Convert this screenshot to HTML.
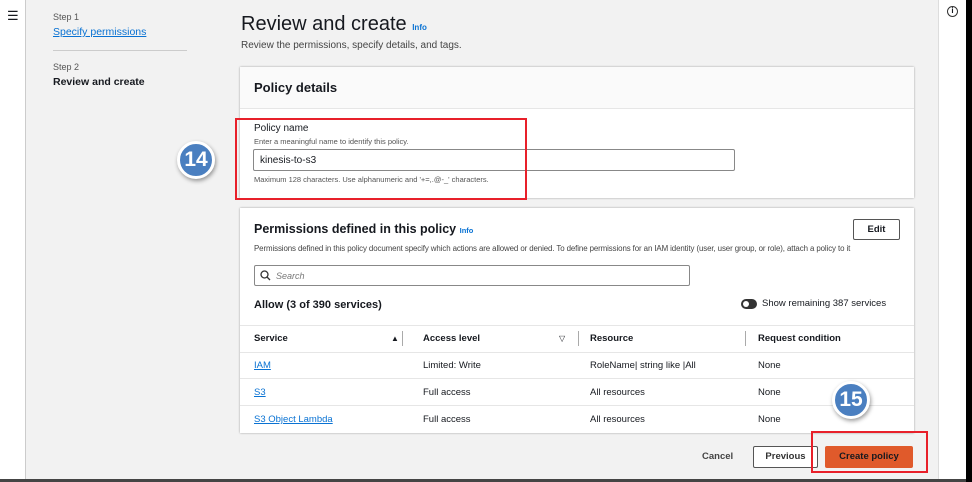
<!DOCTYPE html>
<html><head><style>
*{margin:0;padding:0;box-sizing:border-box}
body{width:972px;height:482px;overflow:hidden;background:#f2f2f2;font-family:"Liberation Sans",sans-serif;color:#16191f;position:relative}
.a{position:absolute;white-space:nowrap}
.lnk{color:#0972d3;text-decoration:underline}
.card{position:absolute;background:#fff;box-shadow:0 0 2px rgba(0,0,0,.35)}
.circ{position:absolute;border-radius:50%;background:#4a7fc0;border:3px solid #fff;box-shadow:1px 2px 4px rgba(0,0,0,.4);color:#fff;font-weight:bold;font-size:21px;display:flex;align-items:center;justify-content:center}
.hl{position:absolute;border-top:1px solid #e6e6e6}
</style></head><body>
<div class="a" style="left:0;top:0;width:26px;height:482px;background:#fff;border-right:1px solid #ccc"></div>
<div class="a" style="left:7px;top:8px;font-size:13px">☰</div>
<div class="a" style="left:938px;top:0;width:28px;height:482px;background:#fff;border-left:1px solid #ddd"></div>
<div class="a" style="left:966px;top:0;width:6px;height:482px;background:#000"></div>
<div class="a" style="left:947px;top:6px;width:11px;height:11px;border:1.3px solid #333;border-radius:50%;font-size:8px;line-height:8px;text-align:center;font-weight:bold">i</div>
<div class="a" style="left:0;top:479px;width:966px;height:3px;background:#444"></div>

<div class="a" style="left:53px;top:12px;font-size:9px;color:#555">Step 1</div>
<div class="a lnk" style="left:53px;top:26px;font-size:10.5px">Specify permissions</div>
<div class="hl" style="left:53px;top:50px;width:134px;border-color:#ccc"></div>
<div class="a" style="left:53px;top:62px;font-size:9px;color:#555">Step 2</div>
<div class="a" style="left:53px;top:76px;font-size:10.5px;font-weight:bold">Review and create</div>

<div class="a" style="left:241px;top:13px;font-size:20px">Review and create <span style="font-size:8px;color:#0972d3;font-weight:bold">Info</span></div>
<div class="a" style="left:241px;top:40px;font-size:10px;color:#444">Review the permissions, specify details, and tags.</div>

<div class="card" style="left:240px;top:67px;width:674px;height:131px">
  <div style="height:42px;background:#fafafa;border-bottom:1px solid #e6e6e6"></div>
  <div class="a" style="left:14px;top:13px;font-size:13px;font-weight:bold">Policy details</div>
  <div class="a" style="left:14px;top:56px;font-size:10px">Policy name</div>
  <div class="a" style="left:14px;top:70px;font-size:7.5px;color:#555">Enter a meaningful name to identify this policy.</div>
  <div class="a" style="left:13px;top:82px;width:482px;height:22px;border:1px solid #888;border-radius:2px;font-size:10px;padding:5px 0 0 6px">kinesis-to-s3</div>
  <div class="a" style="left:14px;top:108px;font-size:7.5px;color:#555">Maximum 128 characters. Use alphanumeric and '+=,.@-_' characters.</div>
</div>
<div class="a" style="left:235px;top:118px;width:292px;height:82px;border:2px solid #e8202a"></div>
<div class="circ" style="left:177px;top:141px;width:38px;height:38px">14</div>

<div class="card" style="left:240px;top:208px;width:674px;height:225px">
  <div class="a" style="left:14px;top:14px;font-size:12.5px;font-weight:bold">Permissions defined in this policy <span style="font-size:7.5px;color:#0972d3">Info</span></div>
  <div class="a" style="left:613px;top:11px;width:47px;height:21px;border:1px solid #555;border-radius:2px;font-size:9.5px;font-weight:bold;text-align:center;line-height:19px">Edit</div>
  <div class="a" style="left:14px;top:36px;font-size:7.9px;letter-spacing:-0.1px;color:#444">Permissions defined in this policy document specify which actions are allowed or denied. To define permissions for an IAM identity (user, user group, or role), attach a policy to it</div>
  <div class="a" style="left:14px;top:57px;width:436px;height:21px;border:1px solid #888;border-radius:2px;font-size:9px;color:#777;font-style:italic;padding:5px 0 0 21px">Search</div>
  <svg class="a" style="left:20px;top:62px" width="11" height="11"><circle cx="4.5" cy="4.5" r="3.5" stroke="#333" stroke-width="1.3" fill="none"/><line x1="7" y1="7" x2="10" y2="10" stroke="#333" stroke-width="1.3"/></svg>
  <div class="a" style="left:14px;top:91px;font-size:11px;font-weight:bold">Allow (3 of 390 services)</div>
  <div class="a" style="left:501px;top:91px;width:16px;height:10px;border-radius:5px;background:#333"></div>
  <div class="a" style="left:503px;top:93px;width:6px;height:6px;border-radius:50%;background:#fff"></div>
  <div class="a" style="left:522px;top:90px;font-size:9.5px">Show remaining 387 services</div>
  <div class="hl" style="left:0;top:117px;width:674px"></div>
  <div class="a" style="left:14px;top:125px;font-size:9.5px;font-weight:bold">Service</div>
  <div class="a" style="left:151px;top:126px;font-size:8px">▲</div>
  <div class="a" style="left:162px;top:123px;height:15px;border-left:1px solid #aaa"></div>
  <div class="a" style="left:183px;top:125px;font-size:9.5px;font-weight:bold">Access level</div>
  <div class="a" style="left:319px;top:126px;font-size:8px">▽</div>
  <div class="a" style="left:338px;top:123px;height:15px;border-left:1px solid #aaa"></div>
  <div class="a" style="left:350px;top:125px;font-size:9.5px;font-weight:bold">Resource</div>
  <div class="a" style="left:505px;top:123px;height:15px;border-left:1px solid #aaa"></div>
  <div class="a" style="left:518px;top:125px;font-size:9.5px;font-weight:bold">Request condition</div>
  <div class="hl" style="left:0;top:144px;width:674px"></div>
  <div class="a lnk" style="left:14px;top:152px;font-size:9.5px">IAM</div>
  <div class="a" style="left:183px;top:152px;font-size:9.5px">Limited: Write</div>
  <div class="a" style="left:350px;top:152px;font-size:9.5px">RoleName| string like |All</div>
  <div class="a" style="left:518px;top:152px;font-size:9.5px">None</div>
  <div class="hl" style="left:0;top:170px;width:674px"></div>
  <div class="a lnk" style="left:14px;top:179px;font-size:9.5px">S3</div>
  <div class="a" style="left:183px;top:179px;font-size:9.5px">Full access</div>
  <div class="a" style="left:350px;top:179px;font-size:9.5px">All resources</div>
  <div class="a" style="left:518px;top:179px;font-size:9.5px">None</div>
  <div class="hl" style="left:0;top:197px;width:674px"></div>
  <div class="a lnk" style="left:14px;top:206px;font-size:9.5px">S3 Object Lambda</div>
  <div class="a" style="left:183px;top:206px;font-size:9.5px">Full access</div>
  <div class="a" style="left:350px;top:206px;font-size:9.5px">All resources</div>
  <div class="a" style="left:518px;top:206px;font-size:9.5px">None</div>
</div>
<div class="circ" style="left:832px;top:381px;width:38px;height:38px">15</div>

<div class="a" style="left:702px;top:451px;font-size:9.5px;font-weight:bold;color:#444">Cancel</div>
<div class="a" style="left:753px;top:446px;width:65px;height:22px;background:#fff;border:1px solid #555;border-radius:2px;font-size:9.5px;font-weight:bold;text-align:center;line-height:20px;color:#333">Previous</div>
<div class="a" style="left:825px;top:446px;width:88px;height:22px;background:#e05a2b;border-radius:2px;font-size:9.5px;font-weight:bold;text-align:center;line-height:22px;color:#16191f">Create policy</div>
<div class="a" style="left:811px;top:431px;width:117px;height:42px;border:2px solid #e8202a"></div>
</body></html>
